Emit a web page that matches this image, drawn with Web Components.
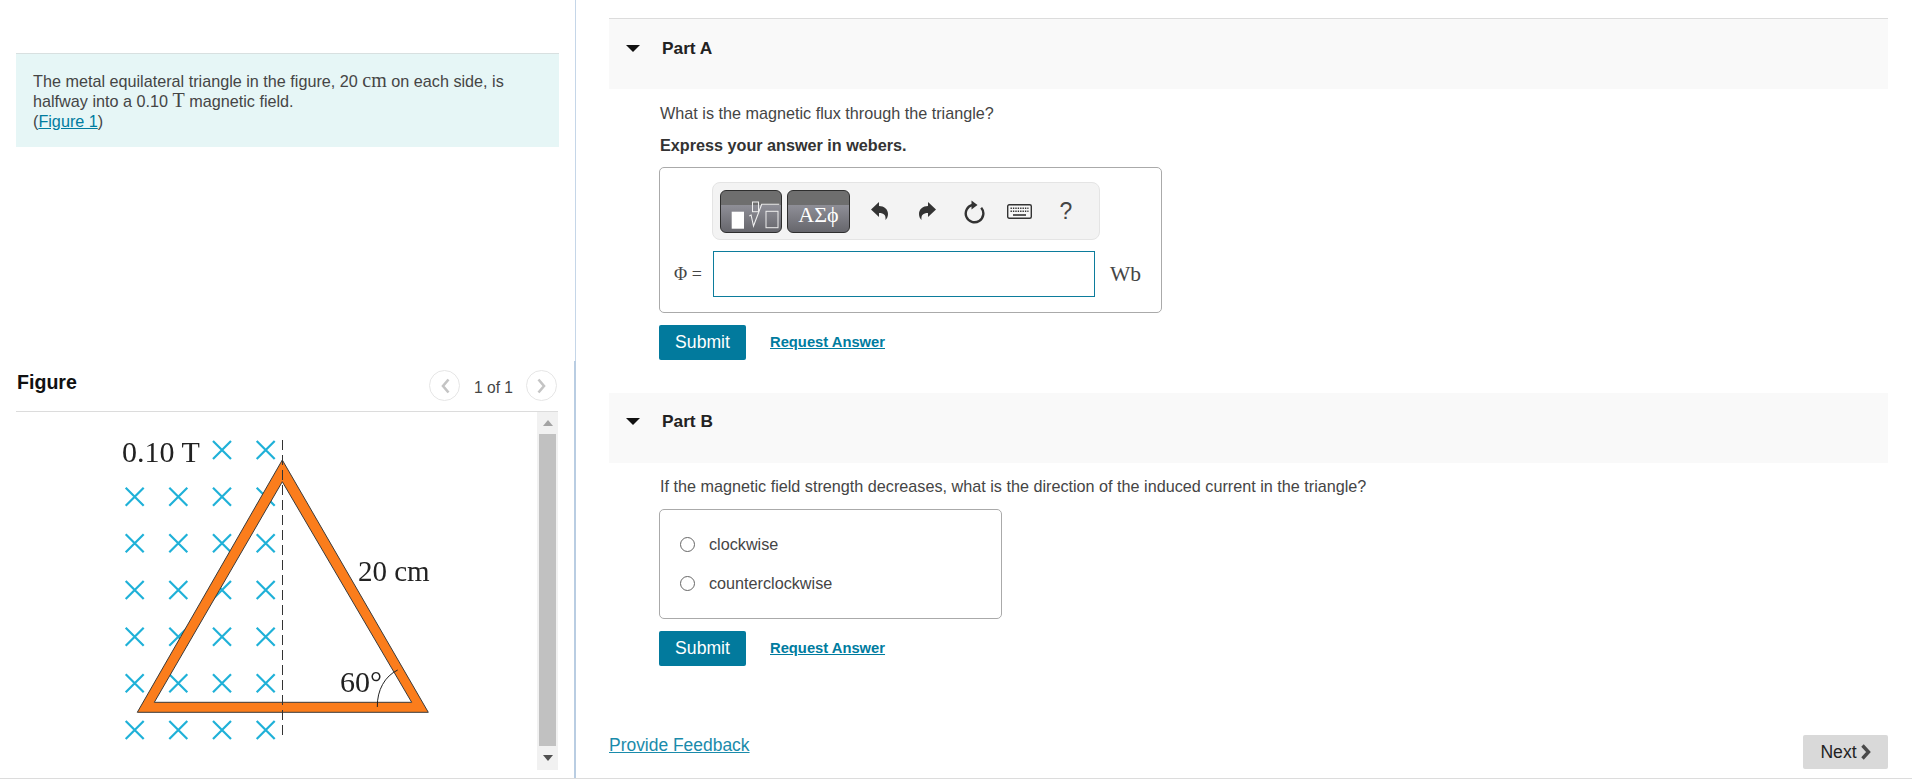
<!DOCTYPE html>
<html lang="en">
<head>
<meta charset="utf-8">
<title>Part A</title>
<style>
  html, body { margin: 0; height: 100%; background: #fff; overflow: hidden; }
  body { font-family: "Liberation Sans", Arial, sans-serif; color: #454545; }
</style>
</head>
<body>
<quiz-page>
  <problem-intro slot="left"></problem-intro>
  <figure-panel slot="left"></figure-panel>

  <part-section slot="right" label="Part A" first>
    <div class="question">What is the magnetic flux through the triangle?</div>
    <div class="hint">Express your answer in webers.</div>
    <answer-box></answer-box>
    <action-row></action-row>
  </part-section>
  <part-section slot="right" label="Part B">
    <div class="question">If the magnetic field strength decreases, what is the direction of the induced current in the triangle?</div>
    <choice-box></choice-box>
    <action-row></action-row>
  </part-section>
  <page-footer slot="right"></page-footer>
</quiz-page>

<script>
class QuizPage extends HTMLElement {
    connectedCallback() {
        this.attachShadow({ mode: 'open' });
        this.shadowRoot.innerHTML = `
            <style>
                :host { display: flex; width: 1912px; height: 779px; box-sizing: border-box; border-bottom: 1px solid #dcdcdc; }
                .left { width: 574px; flex: none; padding: 53px 0 0 16px; box-sizing: border-box; }
                .divider { width: 2px; flex: none; display: flex; flex-direction: column; }
                .divider .top { height: 361px; width: 1px; margin-left: 1px; background: #c5d6e8; }
                .divider .bottom { flex: 1; background: #b9cde2; }
                .right { flex: 1; padding: 18px 24px 0 33px; min-width: 0; }
            </style>
            <div class="left"><slot name="left"></slot></div>
            <div class="divider"><div class="top"></div><div class="bottom"></div></div>
            <div class="right"><slot name="right"></slot></div>
        `;
    }
}

class ProblemIntro extends HTMLElement {
    connectedCallback() {
        this.attachShadow({ mode: 'open' });
        this.shadowRoot.innerHTML = `
            <style>
                :host { display: block; width: 543px; height: 94px; box-sizing: border-box; background: #e6f6f6; border-top: 1px solid #d8e0e0; padding: 17px 17px 0; font-size: 16.2px; line-height: 20px; color: #454545; }
                .m { font-family: "Liberation Serif", serif; font-size: 20px; line-height: 0; }
                a { color: #007c9f; }
            </style>
            The metal equilateral triangle in the figure, 20 <span class="m">cm</span> on each side, is<br>
            halfway into a 0.10 <span class="m">T</span> magnetic field.<br>
            (<a href="#fig">Figure 1</a>)
        `;
    }
}

class FigurePanel extends HTMLElement {
    connectedCallback() {
        this.attachShadow({ mode: 'open' });
        let crosses = '';
        const cols = [134.7, 178.3, 222, 265.7];
        const rows = [450, 496.7, 543.3, 590, 636.7, 683.3, 730];
        rows.forEach((y, r) => cols.forEach((x, c) => {
            if (r === 0 && c < 2) return;
            crosses += `<path d="M${x - 9} ${y - 9}L${x + 9} ${y + 9}M${x + 9} ${y - 9}L${x - 9} ${y + 9}"/>`;
        }));
        this.shadowRoot.innerHTML = `
            <style>
                :host { display: block; width: 542px; margin-top: 223px; }
                header { display: flex; align-items: flex-start; height: 42px; box-sizing: border-box; border-bottom: 1px solid #dcdcdc; }
                h2 { margin: 0 0 0 1px; font-size: 19.6px; line-height: 24px; color: #111; flex: 1; }
                .pager { display: flex; align-items: flex-start; gap: 14px; font-size: 15.6px; margin-right: 1px; }
                .pager b { font-weight: 400; width: 38px; white-space: nowrap; margin-top: 9px; }
                .circle { width: 31px; height: 31px; box-sizing: border-box; border: 1px solid #e6e6e6; border-radius: 50%; display: flex; align-items: center; justify-content: center; }
                .body { display: flex; height: 358px; }
                .art { flex: 1; }
                svg.fig { display: block; filter: blur(0.3px); }
                svg.fig text { font-family: "Liberation Serif", serif; font-size: 30px; fill: #222; }
                svg.fig text.s { font-size: 29px; }
                .bar { width: 21px; flex: none; background: #f1f1f1; display: flex; flex-direction: column; align-items: center; }
                .thumb { width: 17px; height: 312px; background: #c1c1c1; }
                .cap { flex: 1; display: flex; align-items: center; justify-content: center; }
                .cap.up { flex: none; height: 22px; }
            </style>
            <header>
                <h2>Figure</h2>
                <div class="pager">
                    <span class="circle"><svg width="10" height="16" viewBox="0 0 10 16"><path d="M8.5 1.5L3 8l5.5 6.5" fill="none" stroke="#c4c4c4" stroke-width="2.6"/></svg></span>
                    <b>1 of 1</b>
                    <span class="circle"><svg width="10" height="16" viewBox="0 0 10 16"><path d="M1.5 1.5L7 8l-5.5 6.5" fill="none" stroke="#c4c4c4" stroke-width="2.6"/></svg></span>
                </div>
            </header>
            <div class="body">
                <div class="art">
                    <svg class="fig" width="521" height="358" viewBox="16 412 521 358">
                        <g stroke="#1fb1d8" stroke-width="2.2" fill="none">${crosses}</g>
                        <path d="M282.3 460L428.3 712.3H137.3Z M282.3 481.7L154.3 702.3H411.7Z" fill="#fb7d1c" fill-rule="evenodd" stroke="#3a3a3a" stroke-width="1"/>
                        <path d="M282.5 440V735" stroke="#333" stroke-width="1" stroke-dasharray="10 5" fill="none"/>
                        <path d="M377.3 707C377 690 385 676 397.7 670" stroke="#222" stroke-width="1" fill="none"/>
                        <text x="122" y="462">0.10 T</text>
                        <text class="s" x="358" y="581">20 cm</text>
                        <text x="340" y="692">60°</text>
                    </svg>
                </div>
                <div class="bar">
                    <div class="cap up"><svg width="10" height="6"><path d="M0 6L5 0l5 6z" fill="#a3a3a3"/></svg></div>
                    <div class="thumb"></div>
                    <div class="cap"><svg width="10" height="6"><path d="M0 0h10L5 6z" fill="#505050"/></svg></div>
                </div>
            </div>
        `;
    }
}

class PartSection extends HTMLElement {
    connectedCallback() {
        this.attachShadow({ mode: 'open' });
        this.shadowRoot.innerHTML = `
            <style>
                :host { display: block; }
                :host([first]) { height: 375px; }
                :host([first]) .bar { border-top: 1px solid #dcdcdc; height: 71px; padding-top: 19px; }
                :host([first]) .content { padding-top: 14px; }
                .bar { display: flex; height: 70px; background: #f9f9f9; padding: 18px 0 0 17px; box-sizing: border-box; }
                .bar i { display: block; margin-top: 7px; width: 0; height: 0; border: 7px solid transparent; border-top: 7px solid #111; border-bottom: 0; }
                .bar span { margin-left: 22px; font-weight: 700; font-size: 17.3px; line-height: 20px; color: #222; }
                .content { padding: 13px 0 0 50px; font-size: 16.2px; }
                ::slotted(.question) { line-height: 20px; padding-left: 1px; }
                ::slotted(.hint) { font-weight: 700; line-height: 20px; margin-top: 12px; padding-left: 1px; color: #333; }
            </style>
            <div class="bar"><i></i><span>${this.getAttribute('label')}</span></div>
            <div class="content"><slot></slot></div>
        `;
    }
}

class MathToolbar extends HTMLElement {
    connectedCallback() {
        this.attachShadow({ mode: 'open' });
        this.shadowRoot.innerHTML = `
            <style>
                :host { display: flex; align-items: center; width: 388px; height: 58px; box-sizing: border-box; background: #f3f3f3; border: 1px solid #e4e4e4; border-radius: 8px; padding: 0 0 0 7px; }
                .tpl { height: 43px; box-sizing: border-box; border: 1px solid #2e2e2e; border-radius: 6px; background: linear-gradient(#6e6e6e 0, #6e6e6e 14px, #8f8f97 14px, #66666c 100%); color: #fff; display: flex; align-items: flex-end; justify-content: center; overflow: hidden; }
                .a { width: 62px; margin-right: 5px; }
                .b { width: 63px; font-family: "Liberation Serif", serif; font-size: 22px; line-height: 26px; padding-bottom: 4px; }
                .ic { flex: none; display: flex; justify-content: center; align-items: center; color: #333; }
                .q { font-size: 23px; color: #444; }
            </style>
            <div class="tpl a"><svg width="60" height="41" viewBox="0 0 60 41">
                <rect x="10.7" y="20.7" width="12.3" height="17" fill="#fff"/>
                <rect x="31.5" y="11" width="6" height="9.7" fill="none" stroke="#eee" stroke-width="1"/>
                <path d="M28.3 25l1.8-1 2.4 11 8.2-21.7H58.3" fill="none" stroke="#eee" stroke-width="1.1"/>
                <rect x="45" y="20.3" width="12" height="16.4" fill="none" stroke="#eee" stroke-width="1"/>
            </svg></div>
            <div class="tpl b">ΑΣϕ</div>
            <span class="ic" style="margin-left:20px;width:18px"><svg width="18" height="18" viewBox="0 0 18 18"><path d="M1 7.5L9 0V4C14 4 18 7 18 12C18 14.5 17 16.5 15.5 18C16 13 14 11 9 11V15Z" fill="#333"/></svg></span>
            <span class="ic" style="margin-left:31px;width:18px"><svg width="18" height="18" viewBox="0 0 18 18"><path d="M17 7.5L9 0V4C4 4 0 7 0 12C0 14.5 1 16.5 2.5 18C2 13 4 11 9 11V15Z" fill="#333"/></svg></span>
            <span class="ic" style="margin-left:27px;width:22px;margin-top:1px"><svg width="22" height="24" viewBox="0 0 22 24"><path d="M17.2 7.7A8.8 8.8 0 1 1 8.5 4.9" fill="none" stroke="#333" stroke-width="2.4"/><path d="M7.5 0.5L13.5 5 7.5 9.5z" fill="#333"/></svg></span>
            <span class="ic" style="margin-left:21px;width:25px"><svg width="25" height="15" viewBox="0 0 25 15"><rect x=".7" y=".7" width="23.6" height="13.6" rx="1.5" fill="#f7f7f7" stroke="#333" stroke-width="1.4"/><path d="M3.5 4.2h18M3.5 7.2h18" stroke="#333" stroke-width="1.6" stroke-dasharray="1.4 1"/><path d="M6 11h13" stroke="#333" stroke-width="1.6"/></svg></span>
            <span class="ic q" style="margin-left:25px;width:18px">?</span>
        `;
    }
}

class AnswerBox extends HTMLElement {
    connectedCallback() {
        this.attachShadow({ mode: 'open' });
        this.shadowRoot.innerHTML = `
            <style>
                :host { display: block; width: 503px; height: 146px; box-sizing: border-box; border: 1px solid #aaa; border-radius: 5px; margin-top: 12px; padding: 14px 0 0 52px; }
                .row { display: flex; align-items: center; margin-top: 11px; margin-left: -38px; }
                .lhs { width: 39px; font-family: "Liberation Serif", serif; font-size: 18px; white-space: nowrap; }
                .input { width: 382px; height: 46px; box-sizing: border-box; border: 1px solid #0c7c9c; background: #fff; }
                .unit { margin-left: 15px; font-family: "Liberation Serif", serif; font-size: 21.5px; }
            </style>
            <math-toolbar></math-toolbar>
            <div class="row">
                <span class="lhs">Φ =</span>
                <div class="input"></div>
                <span class="unit">Wb</span>
            </div>
        `;
    }
}

class ChoiceBox extends HTMLElement {
    connectedCallback() {
        this.attachShadow({ mode: 'open' });
        this.shadowRoot.innerHTML = `
            <style>
                :host { display: block; width: 343px; height: 110px; box-sizing: border-box; border: 1px solid #aaa; border-radius: 5px; margin-top: 13px; padding: 24px 0 0 20px; font-size: 16.2px; }
                .opt { display: flex; align-items: center; height: 20px; margin-bottom: 19px; }
                .opt i { width: 15px; height: 15px; box-sizing: border-box; border: 1.5px solid #666; border-radius: 50%; margin-right: 14px; background: #fff; flex: none; }
            </style>
            <div class="opt"><i></i><span>clockwise</span></div>
            <div class="opt"><i></i><span>counterclockwise</span></div>
        `;
    }
}

class ActionRow extends HTMLElement {
    connectedCallback() {
        this.attachShadow({ mode: 'open' });
        this.shadowRoot.innerHTML = `
            <style>
                :host { display: flex; align-items: center; margin-top: 12px; height: 35px; }
                button { width: 87px; height: 35px; padding: 0; border: 0; border-radius: 2px; background: #027a9d; color: #fff; font: 17.6px "Liberation Sans", Arial, sans-serif; }
                a { margin-left: 24px; font-size: 14.75px; font-weight: 700; color: #007c9f; margin-top: -2px; }
            </style>
            <button>Submit</button>
            <a href="#answer">Request Answer</a>
        `;
    }
}

class PageFooter extends HTMLElement {
    connectedCallback() {
        this.attachShadow({ mode: 'open' });
        this.shadowRoot.innerHTML = `
            <style>
                :host { display: flex; justify-content: space-between; align-items: flex-start; margin-top: 61px; }
                a { font-size: 17.45px; line-height: 20px; color: #1a8bab; margin-top: 8px; }
                .next { width: 85px; height: 34px; margin-top: 8px; border-radius: 2px; background: #d9d9d9; color: #222; font-size: 17.6px; display: flex; align-items: center; justify-content: center; gap: 3px; }
            </style>
            <a href="#feedback">Provide Feedback</a>
            <div class="next">Next<svg width="11" height="16" viewBox="0 0 11 16"><path d="M2.5 1.5L8.5 8l-6 6.5" fill="none" stroke="#4a4a4a" stroke-width="3.4"/></svg></div>
        `;
    }
}

customElements.define('quiz-page', QuizPage);
customElements.define('problem-intro', ProblemIntro);
customElements.define('figure-panel', FigurePanel);
customElements.define('part-section', PartSection);
customElements.define('math-toolbar', MathToolbar);
customElements.define('answer-box', AnswerBox);
customElements.define('choice-box', ChoiceBox);
customElements.define('action-row', ActionRow);
customElements.define('page-footer', PageFooter);
</script>
</body>
</html>
